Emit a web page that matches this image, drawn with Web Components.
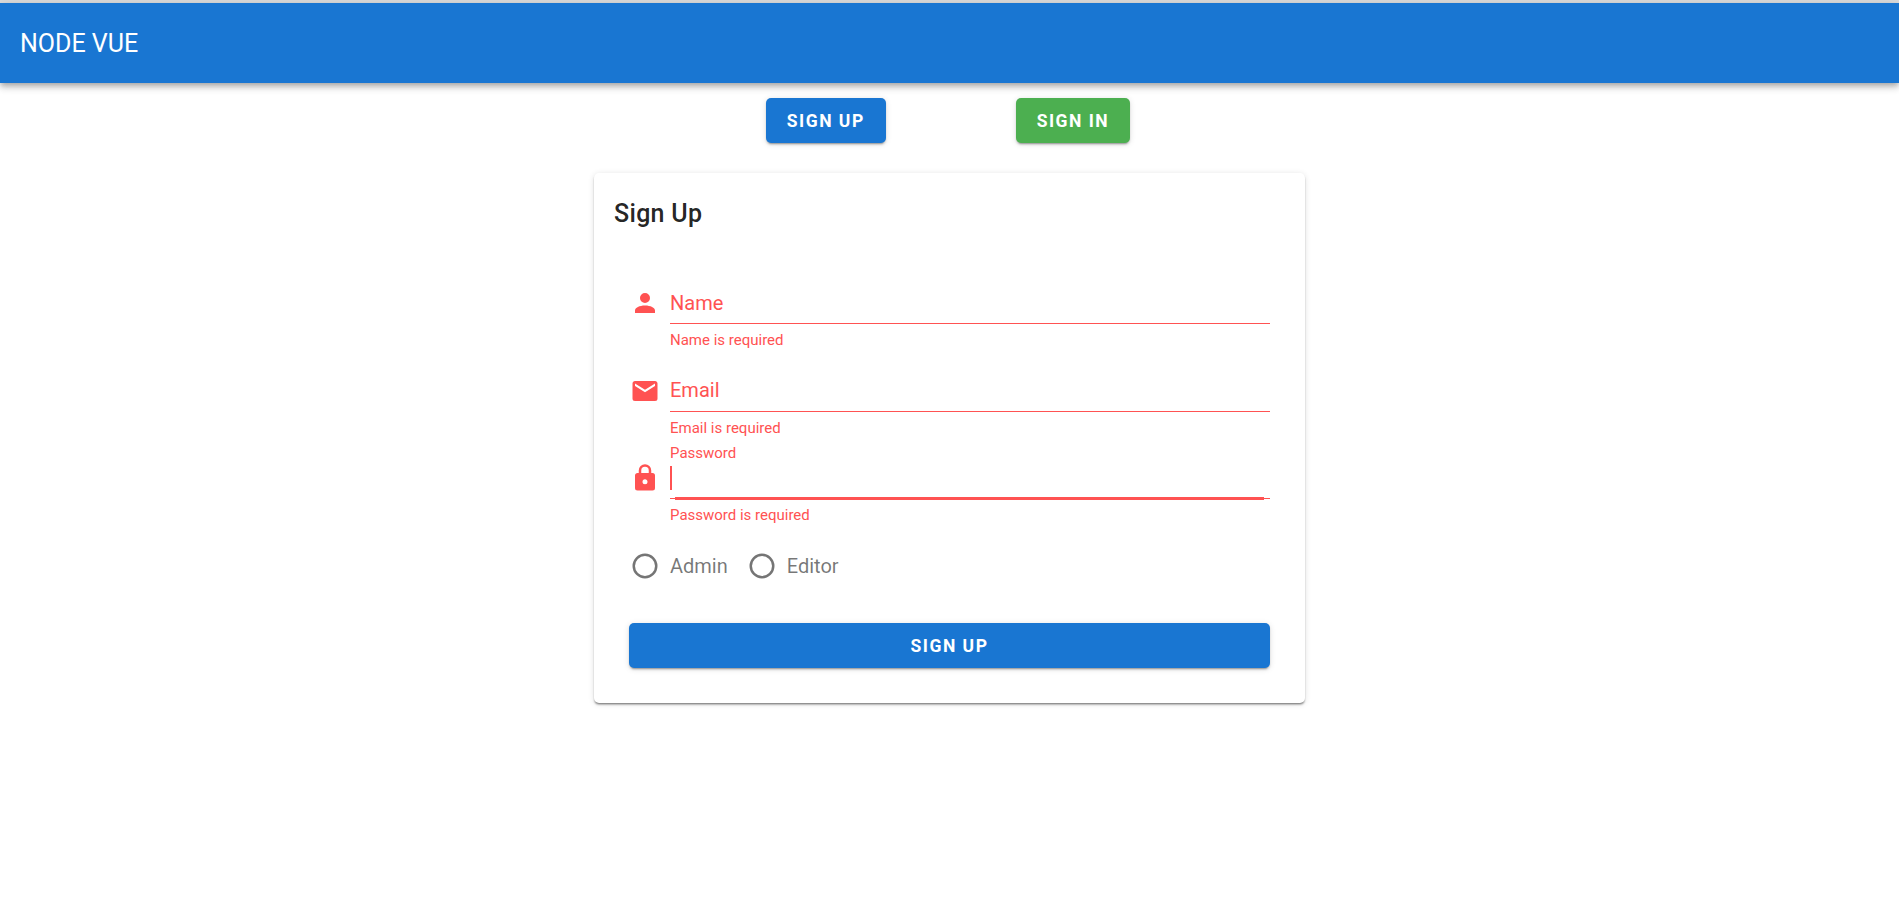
<!DOCTYPE html>
<html>
<head>
<meta charset="utf-8">
<title>Node Vue</title>
<style>
    html, body { margin: 0; background: #fff; }
    body { font-family: Roboto, "Liberation Sans", sans-serif; width: 1899px; min-height: 100vh; }
    .switch { display: flex; justify-content: center; gap: 130px; padding: 15px 3px 0 0; }
</style>
</head>
<body>
<app-bar>NODE VUE</app-bar>
<div class="switch">
    <app-button color="#1976d2">SIGN UP</app-button>
    <app-button color="#4caf50">SIGN IN</app-button>
</div>
<sign-card></sign-card>

<script>
const ICONS = {
    account: 'M12,4A4,4 0 0,1 16,8A4,4 0 0,1 12,12A4,4 0 0,1 8,8A4,4 0 0,1 12,4M12,14C16.42,14 20,15.79 20,18V20H4V18C4,15.79 7.58,14 12,14Z',
    email: 'M20,8L12,13L4,8V6L12,11L20,6M20,4H4C2.89,4 2,4.89 2,6V18A2,2 0 0,0 4,20H20A2,2 0 0,0 22,18V6C22,4.89 21.1,4 20,4Z',
    lock: 'M12,17A2,2 0 0,0 14,15C14,13.89 13.1,13 12,13A2,2 0 0,0 10,15A2,2 0 0,0 12,17M18,8A2,2 0 0,1 20,10V20A2,2 0 0,1 18,22H6A2,2 0 0,1 4,20V10C4,8.89 4.9,8 6,8H7V6A5,5 0 0,1 12,1A5,5 0 0,1 17,6V8H18M12,3A3,3 0 0,0 9,6V8H15V6A3,3 0 0,0 12,3Z',
    radio: 'M12,20A8,8 0 0,1 4,12A8,8 0 0,1 12,4A8,8 0 0,1 20,12A8,8 0 0,1 12,20M12,2A10,10 0 0,0 2,12A10,10 0 0,0 12,22A10,10 0 0,0 22,12A10,10 0 0,0 12,2Z'
};

class AppBar extends HTMLElement {
    constructor() {
        super();
        this.attachShadow({ mode: 'open' });
        this.shadowRoot.innerHTML = `
            <style>
                :host { display: block; border-top: 3px solid #dcdcdc; }
                header {
                    height: 80px;
                    display: flex;
                    align-items: center;
                    padding: 0 20px;
                    background: #1976d2;
                    color: #fff;
                    font-size: 25px;
                    font-weight: 400;
                    box-shadow: 0 2.5px 5px -1px rgba(0,0,0,.2), 0 5px 6px 0 rgba(0,0,0,.14), 0 1px 12px 0 rgba(0,0,0,.12);
                }
            </style>
            <header><slot></slot></header>
        `;
    }
}

class AppButton extends HTMLElement {
    constructor() {
        super();
        this.attachShadow({ mode: 'open' });
    }

    connectedCallback() {
        const color = this.getAttribute('color') || '#1976d2';
        this.shadowRoot.innerHTML = `
            <style>
                :host { display: inline-block; }
                :host([block]) { display: block; }
                button {
                    width: 100%;
                    height: 45px;
                    padding: 0 21px;
                    border: 0;
                    border-radius: 5px;
                    background: ${color};
                    color: #fff;
                    font: 700 17.5px Roboto, sans-serif;
                    letter-spacing: 1.5px;
                    box-shadow: 0 3px 1px -2px rgba(0,0,0,.2), 0 2px 2px 0 rgba(0,0,0,.14), 0 1px 6px 0 rgba(0,0,0,.12);
                }
            </style>
            <button><slot></slot></button>
        `;
    }
}

class TextField extends HTMLElement {
    constructor() {
        super();
        this.attachShadow({ mode: 'open' });
    }

    connectedCallback() {
        const focused = this.hasAttribute('focused');
        this.shadowRoot.innerHTML = `
            <style>
                :host {
                    display: grid;
                    grid-template-columns: 30px 1fr;
                    grid-template-rows: 40px auto;
                    column-gap: 10px;
                    height: 87.5px;
                    color: #ff5252;
                }
                svg { width: 30px; height: 30px; fill: currentColor; align-self: center; margin-top: -2px; }
                .slot { position: relative; height: 40px; border-bottom: 1px solid currentColor; box-sizing: border-box; }
                label { position: absolute; left: 0; top: 6.5px; font-size: 20px; line-height: 25px; }
                :host([focused]) label { top: -16px; font-size: 15px; line-height: 20px; }
                .caret { position: absolute; left: 0; top: 7px; width: 1.5px; height: 24px; background: currentColor; }
                .bar { position: absolute; left: 5px; right: 6px; bottom: -2px; height: 3px; background: currentColor; }
                .msg { grid-column: 2; font-size: 15px; line-height: 19px; padding-top: 7px; }
            </style>
            <svg viewBox="0 0 24 24"><path d="${ICONS[this.getAttribute('icon')]}"/></svg>
            <div class="slot">
                <label>${this.getAttribute('label')}</label>
                ${focused ? '<div class="caret"></div><div class="bar"></div>' : ''}
            </div>
            <div class="msg"><slot></slot></div>
        `;
    }
}

class RadioOption extends HTMLElement {
    constructor() {
        super();
        this.attachShadow({ mode: 'open' });
        this.shadowRoot.innerHTML = `
            <style>
                :host { display: flex; align-items: center; gap: 10px; font-size: 20px; color: rgba(0,0,0,.54); }
                svg { width: 30px; height: 30px; fill: rgba(0,0,0,.54); }
            </style>
            <svg viewBox="0 0 24 24"><path d="${ICONS.radio}"/></svg>
            <slot></slot>
        `;
    }
}

class SignCard extends HTMLElement {
    constructor() {
        super();
        this.attachShadow({ mode: 'open' });
        this.shadowRoot.innerHTML = `
            <style>
                :host {
                    display: block;
                    width: 711px;
                    margin: 30px auto 0;
                    background: #fff;
                    border-radius: 5px;
                    box-shadow: 0 2px 2px -1px rgba(0,0,0,.4), 0 2px 2px 0 rgba(0,0,0,.14), 0 1px 6px 0 rgba(0,0,0,.12);
                }
                h2 {
                    margin: 0;
                    padding: 21px 20px 0;
                    font-size: 25px;
                    font-weight: 500;
                    letter-spacing: .31px;
                    line-height: 40px;
                    color: rgba(0,0,0,.87);
                }
                form { padding: 50px 35px 35px 36px; }
                .radios { display: flex; height: 40px; gap: 19px; align-items: center; margin-top: -1px; }
                .submit { margin: 37.5px 0 0 -1px; }
            </style>
            <h2>Sign Up</h2>
            <form>
                <text-field icon="account" label="Name">Name is required</text-field>
                <text-field icon="email" label="Email">Email is required</text-field>
                <text-field icon="lock" label="Password" focused>Password is required</text-field>
                <div class="radios">
                    <radio-option>Admin</radio-option>
                    <radio-option>Editor</radio-option>
                </div>
                <div class="submit"><app-button block color="#1976d2">SIGN UP</app-button></div>
            </form>
        `;
    }
}

customElements.define('app-bar', AppBar);
customElements.define('app-button', AppButton);
customElements.define('text-field', TextField);
customElements.define('radio-option', RadioOption);
customElements.define('sign-card', SignCard);
</script>
</body>
</html>
